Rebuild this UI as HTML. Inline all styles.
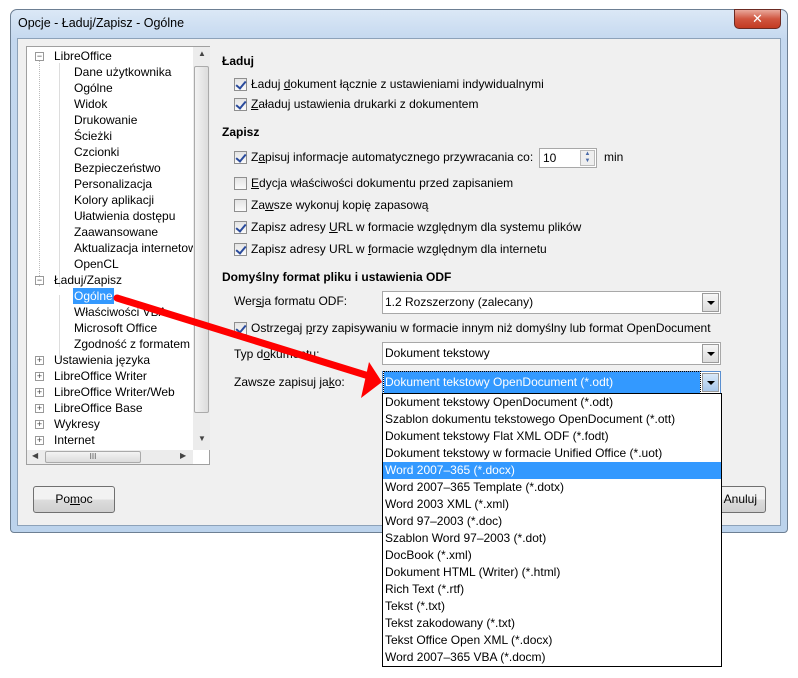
<!DOCTYPE html>
<html><head><meta charset="utf-8"><style>
*{margin:0;padding:0;box-sizing:border-box}
body{width:798px;height:678px;background:#fff;position:relative;overflow:hidden;font-family:"Liberation Sans","DejaVu Sans",sans-serif;font-size:12px;color:#000}
.a{position:absolute;white-space:nowrap}
.win{position:absolute;left:10px;top:9px;width:778px;height:524px;border:1px solid #6d7f93;border-radius:7px 7px 4px 4px;background:linear-gradient(#dbe8f6,#c4d8ef 30px,#bcd3ec);}
.client{position:absolute;left:17px;top:38px;width:764px;height:488px;background:#f0f0f0;border:1px solid #8da2b9}
.tree{position:absolute;left:26px;top:46px;width:184px;height:419px;background:#fff;border:1px solid #a0a0a0}
.ti{position:absolute;height:16px;line-height:16px}
.cb{position:absolute;width:13px;height:13px;border:1px solid #8f8f8f;background:linear-gradient(#e4e4e4,#fafafa)}
.cb.c::after{content:"";position:absolute;left:3px;top:0px;width:4px;height:8px;border:solid #2a4b9c;border-width:0 2px 2px 0;transform:rotate(40deg)}
.b{font-weight:bold}
.combo{position:absolute;left:382px;width:339px;height:23px;border:1px solid #a8a8a8;background:#fff;line-height:21px;padding-left:2px}
.combo .btn{position:absolute;right:1px;top:1px;width:17px;height:19px;border:1px solid #9a9a9a;background:linear-gradient(#f6f6f6,#dcdcdc)}
.combo .btn::after{content:"";position:absolute;left:4px;top:7px;border:4px solid transparent;border-top:4px solid #000}
.list{position:absolute;left:382px;top:393px;width:340px;height:274px;background:#fff;border:1px solid #000}
.li{height:17px;line-height:17px;padding-left:2px}
.sel{background:#3399ff;color:#fff}
.pm{position:absolute;width:9px;height:9px;border:1px solid #999;background:#fff;font-size:9px;line-height:7px;text-align:center;color:#444}
.button{position:absolute;height:27px;border:1px solid #707070;border-radius:3px;background:linear-gradient(#f2f2f2 50%,#dddddd 50%,#cfcfcf);text-align:center;line-height:25px}
u{text-decoration:underline}
</style></head><body>
<div class="win"></div>
<div class="a" style="left:18px;top:16px;font-size:12.5px">Opcje - Ładuj/Zapisz - Ogólne</div>
<div class="a" style="left:734px;top:9px;width:47px;height:20px;border:1px solid #6b2a22;border-radius:0 0 5px 5px;background:linear-gradient(#e9a99c,#d0553f 50%,#c23b22);color:#fff;font-weight:bold;text-align:center;line-height:18px;font-size:13px">✕</div>
<div class="client"></div>
<div class="tree">
<div class="pm" style="left:8px;top:5px">−</div>
<div style="position:absolute;left:12px;top:14px;height:225px;border-left:1px dotted #bbb"></div>
<div style="position:absolute;left:32px;top:16px;height:224px;border-left:1px solid #ddd"></div>
<div style="position:absolute;left:32px;top:248px;height:64px;border-left:1px solid #ddd"></div>
<div class="pm" style="left:8px;top:229px">−</div>
<div class="ti" style="left:27px;top:1px">LibreOffice</div>
<div class="ti" style="left:47px;top:17px">Dane użytkownika</div>
<div class="ti" style="left:47px;top:33px">Ogólne</div>
<div class="ti" style="left:47px;top:49px">Widok</div>
<div class="ti" style="left:47px;top:65px">Drukowanie</div>
<div class="ti" style="left:47px;top:81px">Ścieżki</div>
<div class="ti" style="left:47px;top:97px">Czcionki</div>
<div class="ti" style="left:47px;top:113px">Bezpieczeństwo</div>
<div class="ti" style="left:47px;top:129px">Personalizacja</div>
<div class="ti" style="left:47px;top:145px">Kolory aplikacji</div>
<div class="ti" style="left:47px;top:161px">Ułatwienia dostępu</div>
<div class="ti" style="left:47px;top:177px">Zaawansowane</div>
<div class="ti" style="left:47px;top:193px">Aktualizacja internetowa</div>
<div class="ti" style="left:47px;top:209px">OpenCL</div>
<div class="ti" style="left:27px;top:225px">Ładuj/Zapisz</div>
<div class="ti sel" style="left:46px;top:241px;padding:0 1px">Ogólne</div>
<div class="ti" style="left:47px;top:257px">Właściwości VBA</div>
<div class="ti" style="left:47px;top:273px">Microsoft Office</div>
<div class="ti" style="left:47px;top:289px">Zgodność z formatem</div>
<div class="pm" style="left:8px;top:309px">+</div><div class="ti" style="left:27px;top:305px">Ustawienia języka</div>
<div class="pm" style="left:8px;top:325px">+</div><div class="ti" style="left:27px;top:321px">LibreOffice Writer</div>
<div class="pm" style="left:8px;top:341px">+</div><div class="ti" style="left:27px;top:337px">LibreOffice Writer/Web</div>
<div class="pm" style="left:8px;top:357px">+</div><div class="ti" style="left:27px;top:353px">LibreOffice Base</div>
<div class="pm" style="left:8px;top:373px">+</div><div class="ti" style="left:27px;top:369px">Wykresy</div>
<div class="pm" style="left:8px;top:389px">+</div><div class="ti" style="left:27px;top:385px">Internet</div>
<div style="position:absolute;left:166px;top:0;width:17px;height:403px;background:#ececec"></div>
<div style="position:absolute;left:167px;top:19px;width:15px;height:347px;border:1px solid #aaa;border-radius:2px;background:linear-gradient(90deg,#f3f3f3,#dcdcdc)"></div>
<div class="a" style="left:171px;top:2px;font-size:8px;color:#444">▲</div>
<div class="a" style="left:171px;top:387px;font-size:8px;color:#444">▼</div>
<div style="position:absolute;left:0;top:403px;width:166px;height:14px;background:#ececec"></div>
<div style="position:absolute;left:18px;top:404px;width:96px;height:12px;border:1px solid #aaa;border-radius:2px;background:linear-gradient(#f3f3f3,#dcdcdc);font-size:8px;text-align:center;line-height:10px;color:#555">III</div>
<div class="a" style="left:5px;top:404px;font-size:8px;color:#444">◀</div>
<div class="a" style="left:153px;top:404px;font-size:8px;color:#444">▶</div>
</div>

<div class="a b" style="left:222px;top:54px">Ładuj</div>
<div class="cb c" style="left:234px;top:78px"></div><div class="a" style="left:251px;top:77px">Ładuj <u>d</u>okument łącznie z ustawieniami indywidualnymi</div>
<div class="cb c" style="left:234px;top:98px"></div><div class="a" style="left:251px;top:97px"><u>Z</u>aładuj ustawienia drukarki z dokumentem</div>
<div class="a b" style="left:222px;top:125px">Zapisz</div>
<div class="cb c" style="left:234px;top:151px"></div><div class="a" style="left:251px;top:150px">Z<u>a</u>pisuj informacje automatycznego przywracania co:</div>
<div class="a" style="left:539px;top:148px;width:58px;height:20px;border:1px solid #a8a8a8;background:#fff;padding-left:3px;line-height:18px">10</div>
<div class="a" style="left:580px;top:150px;width:15px;height:16px;border:1px solid #bbb;background:#eee;font-size:6px;line-height:7px;text-align:center;color:#4a6aa8">▲<br>▼</div>
<div class="a" style="left:604px;top:150px">min</div>
<div class="cb" style="left:234px;top:177px"></div><div class="a" style="left:251px;top:176px"><u>E</u>dycja właściwości dokumentu przed zapisaniem</div>
<div class="cb" style="left:234px;top:199px"></div><div class="a" style="left:251px;top:198px">Za<u>w</u>sze wykonuj kopię zapasową</div>
<div class="cb c" style="left:234px;top:221px"></div><div class="a" style="left:251px;top:220px">Zapisz adresy <u>U</u>RL w formacie względnym dla systemu plików</div>
<div class="cb c" style="left:234px;top:243px"></div><div class="a" style="left:251px;top:242px">Zapisz adresy URL w <u>f</u>ormacie względnym dla internetu</div>
<div class="a b" style="left:222px;top:270px">Domyślny format pliku i ustawienia ODF</div>
<div class="a" style="left:234px;top:294px">Wer<u>s</u>ja formatu ODF:</div>
<div class="combo" style="top:291px">1.2 Rozszerzony (zalecany)<div class="btn"></div></div>
<div class="cb c" style="left:234px;top:322px"></div><div class="a" style="left:251px;top:321px">Ostrzegaj <u>p</u>rzy zapisywaniu w formacie innym niż domyślny lub format OpenDocument</div>
<div class="a" style="left:234px;top:347px">Typ d<u>o</u>kumentu:</div>
<div class="combo" style="top:342px">Dokument tekstowy<div class="btn"></div></div>
<div class="a" style="left:234px;top:375px">Zawsze zapisuj ja<u>k</u>o:</div>
<div class="combo" style="top:371px;border-color:#5a8fd0"><span style="background:#3399ff;color:#fff;display:inline-block;width:316px;margin-left:-1px;padding-left:1px;outline:1px dotted #000">Dokument tekstowy OpenDocument (*.odt)</span><div class="btn" style="background:linear-gradient(#d8e8f8,#a8c8ec)"></div></div>

<div class="button" style="left:33px;top:486px;width:82px">Po<u>m</u>oc</div>
<div class="button" style="left:700px;top:486px;width:66px;text-align:right;padding-right:8px">Anuluj</div>

<div class="list">
<div class="li">Dokument tekstowy OpenDocument (*.odt)</div>
<div class="li">Szablon dokumentu tekstowego OpenDocument (*.ott)</div>
<div class="li">Dokument tekstowy Flat XML ODF (*.fodt)</div>
<div class="li">Dokument tekstowy w formacie Unified Office (*.uot)</div>
<div class="li sel">Word 2007–365 (*.docx)</div>
<div class="li">Word 2007–365 Template (*.dotx)</div>
<div class="li">Word 2003 XML (*.xml)</div>
<div class="li">Word 97–2003 (*.doc)</div>
<div class="li">Szablon Word 97–2003 (*.dot)</div>
<div class="li">DocBook (*.xml)</div>
<div class="li">Dokument HTML (Writer) (*.html)</div>
<div class="li">Rich Text (*.rtf)</div>
<div class="li">Tekst (*.txt)</div>
<div class="li">Tekst zakodowany (*.txt)</div>
<div class="li">Tekst Office Open XML (*.docx)</div>
<div class="li">Word 2007–365 VBA (*.docm)</div>
</div>

<svg class="a" style="left:0;top:0" width="798" height="678">
<line x1="117" y1="298" x2="372" y2="377" stroke="#ff0000" stroke-width="7" stroke-linecap="round"/>
<polygon points="382,382 369,362 361,398" fill="#ff0000"/>
</svg>
</body></html>
